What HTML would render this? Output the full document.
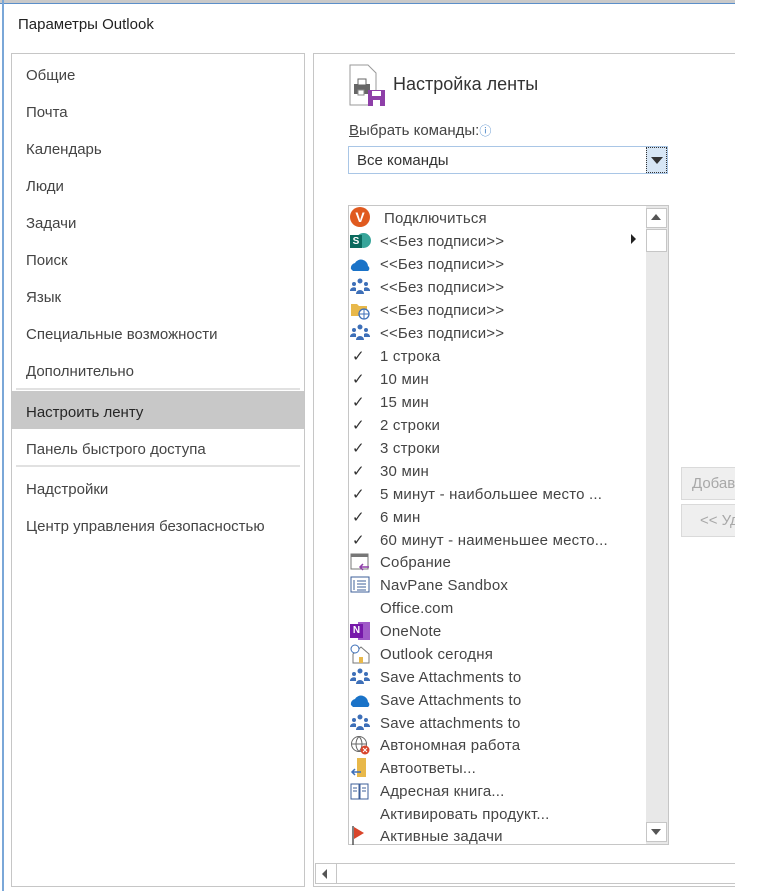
<!DOCTYPE html>
<html><head><meta charset="utf-8"><style>
*{margin:0;padding:0;box-sizing:border-box}
body{width:758px;height:891px;background:#fff;position:relative;overflow:hidden;font-family:"Liberation Sans","DejaVu Sans",sans-serif;color:#444}
.a{position:absolute}
.nav{font-size:15px;color:#444;left:26px;white-space:nowrap;margin-top:2px}
.it{position:absolute;left:380px;font-size:15px;white-space:nowrap;color:#444;line-height:20px;margin-top:1px;letter-spacing:0.2px}
.ck{position:absolute;left:352px;font-size:15px;color:#333;line-height:20px;margin-top:1px}
.ic{position:absolute;left:350px;width:20px;height:20px}
</style></head><body>
<div class="a" style="left:0;top:0;width:735px;height:3px;background:#c9c9c9"></div>
<div class="a" style="left:0;top:3px;width:735px;height:1px;background:#5b8fc9"></div>
<div class="a" style="left:2px;top:0;width:2px;height:891px;background:#7aa7d8"></div>
<div class="a" style="left:18px;top:16px;font-size:15px;color:#222">Параметры Outlook</div>

<div class="a" style="left:11px;top:53px;width:294px;height:834px;border:1px solid #c6c6c6"></div>
<div class="nav a" style="top:65px">Общие</div>
<div class="nav a" style="top:102px">Почта</div>
<div class="nav a" style="top:139px">Календарь</div>
<div class="nav a" style="top:176px">Люди</div>
<div class="nav a" style="top:213px">Задачи</div>
<div class="nav a" style="top:250px">Поиск</div>
<div class="nav a" style="top:287px">Язык</div>
<div class="nav a" style="top:324px">Специальные возможности</div>
<div class="nav a" style="top:361px">Дополнительно</div>
<div class="a" style="left:16px;top:388px;width:284px;height:2px;background:#e1e1e1"></div>
<div class="a" style="left:12px;top:391px;width:292px;height:38px;background:#c8c8c8"></div>
<div class="nav a" style="top:402px;color:#262626">Настроить ленту</div>
<div class="nav a" style="top:439px">Панель быстрого доступа</div>
<div class="a" style="left:16px;top:465px;width:284px;height:2px;background:#e1e1e1"></div>
<div class="nav a" style="top:479px">Надстройки</div>
<div class="nav a" style="top:516px">Центр управления безопасностью</div>

<div class="a" style="left:313px;top:53px;width:440px;height:834px;border:1px solid #c6c6c6;border-right:none"></div>
<svg class="a" style="left:348px;top:64px" width="40" height="44">
<path d="M2 1h18l8 8v32H2z" fill="#fff" stroke="#9a9a9a"/>
<rect x="6" y="20" width="16" height="10" fill="#666"/><rect x="10" y="15" width="8" height="6" fill="#fff" stroke="#666"/><rect x="10" y="26" width="6" height="5" fill="#fff" stroke="#888"/>
<rect x="20" y="26" width="17" height="16" fill="#8e3fa8"/><rect x="24" y="27" width="9" height="5" fill="#fff"/><rect x="25" y="36" width="7" height="6" fill="#fff"/>
</svg>
<div class="a" style="left:393px;top:74px;font-size:18px;color:#333">Настройка ленты</div>
<div class="a" style="left:349px;top:122px;font-size:15px;color:#444"><u>В</u>ыбрать команды:<span style="color:#4a86c8;font-size:12px;vertical-align:top">ⓘ</span></div>
<div class="a" style="left:348px;top:146px;width:320px;height:28px;border:1px solid #a9c6e6;background:#fff"></div>
<div class="a" style="left:357px;top:152px;font-size:15px;color:#333">Все команды</div>
<div class="a" style="left:646px;top:147px;width:21px;height:26px;border:1px dotted #333;background:#d7e6f5"></div>
<div class="a" style="left:651px;top:157px;width:0;height:0;border-left:6px solid transparent;border-right:6px solid transparent;border-top:7px solid #333"></div>

<div class="a" style="left:348px;top:205px;width:321px;height:640px;border:1px solid #c6c6c6;background:#fff"></div>
<div class="a" style="left:646px;top:206px;width:22px;height:638px;background:#e8e8e8"></div>
<div class="a" style="left:646px;top:208px;width:21px;height:20px;border:1px solid #c6c6c6;background:#fff"></div>
<div class="a" style="left:651px;top:214px;border-left:5px solid transparent;border-right:5px solid transparent;border-bottom:6px solid #555"></div>
<div class="a" style="left:646px;top:229px;width:21px;height:23px;border:1px solid #c6c6c6;background:#fff"></div>
<div class="a" style="left:646px;top:822px;width:21px;height:20px;border:1px solid #c6c6c6;background:#fff"></div>
<div class="a" style="left:651px;top:829px;border-left:5px solid transparent;border-right:5px solid transparent;border-top:6px solid #555"></div>
<div class="a" style="left:631px;top:234px;border-top:5px solid transparent;border-bottom:5px solid transparent;border-left:5px solid #222"></div>

<div class="ic" style="top:207px;border-radius:50%;background:#e05a1f;color:#fff;font-weight:bold;font-size:14px;text-align:center;line-height:20px">V</div>
<div class="it" style="top:208px;left:384px">Подключиться</div>
<div class="ic" style="top:231px"><div class="a" style="left:6px;top:2px;width:15px;height:15px;border-radius:50%;background:#37a59a"></div><div class="a" style="left:0;top:4px;width:12px;height:13px;background:#0b6a5e;color:#fff;font-size:10px;font-weight:bold;text-align:center;line-height:13px">S</div></div>
<div class="it" style="top:231px">&lt;&lt;Без подписи&gt;&gt;</div>
<svg class="ic" style="top:254px" width="20" height="20"><path d="M1 15a5 5 0 0 1 4-6a7 7 0 0 1 13 3a3 3 0 0 1 0 5H3z" fill="#1a73c8"/></svg>
<div class="it" style="top:254px">&lt;&lt;Без подписи&gt;&gt;</div>
<svg class="ic" style="top:277px" width="20" height="20"><g fill="#3d6fb8"><circle cx="10" cy="4" r="2.5"/><circle cx="4" cy="7" r="2"/><circle cx="16" cy="7" r="2"/><path d="M6 17a4 4 0 0 1 8 0z"/><path d="M0 13a4 4 0 0 1 6 -2v3H0z"/><path d="M14 11a4 4 0 0 1 6 2v1h-6z"/></g></svg>
<div class="it" style="top:277px">&lt;&lt;Без подписи&gt;&gt;</div>
<svg class="ic" style="top:300px" width="20" height="20"><path d="M1 4h6l2 2h8v10H1z" fill="#e8b84a"/><circle cx="14" cy="14" r="5" fill="#fff" stroke="#3d6fb8" stroke-width="1.3"/><path d="M9 14h10M14 9v10" stroke="#3d6fb8"/></svg>
<div class="it" style="top:300px">&lt;&lt;Без подписи&gt;&gt;</div>
<svg class="ic" style="top:323px" width="20" height="20"><g fill="#3d6fb8"><circle cx="10" cy="4" r="2.5"/><circle cx="4" cy="7" r="2"/><circle cx="16" cy="7" r="2"/><path d="M6 17a4 4 0 0 1 8 0z"/><path d="M0 13a4 4 0 0 1 6 -2v3H0z"/><path d="M14 11a4 4 0 0 1 6 2v1h-6z"/></g></svg>
<div class="it" style="top:323px">&lt;&lt;Без подписи&gt;&gt;</div>
<div class="ck" style="top:346px">✓</div><div class="it" style="top:346px">1 строка</div>
<div class="ck" style="top:369px">✓</div><div class="it" style="top:369px">10 мин</div>
<div class="ck" style="top:392px">✓</div><div class="it" style="top:392px">15 мин</div>
<div class="ck" style="top:415px">✓</div><div class="it" style="top:415px">2 строки</div>
<div class="ck" style="top:438px">✓</div><div class="it" style="top:438px">3 строки</div>
<div class="ck" style="top:461px">✓</div><div class="it" style="top:461px">30 мин</div>
<div class="ck" style="top:484px">✓</div><div class="it" style="top:484px">5 минут - наибольшее место ...</div>
<div class="ck" style="top:507px">✓</div><div class="it" style="top:507px">6 мин</div>
<div class="ck" style="top:530px">✓</div><div class="it" style="top:530px">60 минут - наименьшее место...</div>
<svg class="ic" style="top:552px" width="20" height="20"><rect x="1" y="2" width="17" height="15" fill="#fff" stroke="#777"/><rect x="1" y="2" width="17" height="3" fill="#777"/><path d="M19 15h-9m3-3l-3 3l3 3" stroke="#8e3fa8" stroke-width="1.5" fill="none"/></svg>
<div class="it" style="top:552px">Собрание</div>
<svg class="ic" style="top:575px" width="20" height="20"><rect x="1" y="2" width="18" height="15" fill="#fff" stroke="#3d5f9a"/><path d="M4 5v10M7 6h9M7 9h9M7 12h9M7 15h9" stroke="#3d5f9a"/></svg>
<div class="it" style="top:575px">NavPane Sandbox</div>
<div class="it" style="top:598px">Office.com</div>
<div class="ic" style="top:621px"><div class="a" style="left:8px;top:1px;width:12px;height:18px;background:#a05ac8"></div><div class="a" style="left:0;top:3px;width:13px;height:14px;background:#7719aa;color:#fff;font-size:10px;font-weight:bold;text-align:center;line-height:14px">N</div></div>
<div class="it" style="top:621px">OneNote</div>
<svg class="ic" style="top:644px" width="20" height="20"><path d="M3 19V10l8-7l8 7v9z" fill="#fff" stroke="#777"/><rect x="9" y="13" width="4" height="6" fill="#e8b84a"/><circle cx="5" cy="5" r="4" fill="#fff" stroke="#3d6fb8"/></svg>
<div class="it" style="top:644px">Outlook сегодня</div>
<svg class="ic" style="top:667px" width="20" height="20"><g fill="#3d6fb8"><circle cx="10" cy="4" r="2.5"/><circle cx="4" cy="7" r="2"/><circle cx="16" cy="7" r="2"/><path d="M6 17a4 4 0 0 1 8 0z"/><path d="M0 13a4 4 0 0 1 6 -2v3H0z"/><path d="M14 11a4 4 0 0 1 6 2v1h-6z"/></g></svg>
<div class="it" style="top:667px">Save Attachments to</div>
<svg class="ic" style="top:690px" width="20" height="20"><path d="M1 15a5 5 0 0 1 4-6a7 7 0 0 1 13 3a3 3 0 0 1 0 5H3z" fill="#1a73c8"/></svg>
<div class="it" style="top:690px">Save Attachments to</div>
<svg class="ic" style="top:713px" width="20" height="20"><g fill="#3d6fb8"><circle cx="10" cy="4" r="2.5"/><circle cx="4" cy="7" r="2"/><circle cx="16" cy="7" r="2"/><path d="M6 17a4 4 0 0 1 8 0z"/><path d="M0 13a4 4 0 0 1 6 -2v3H0z"/><path d="M14 11a4 4 0 0 1 6 2v1h-6z"/></g></svg>
<div class="it" style="top:713px">Save attachments to</div>
<svg class="ic" style="top:735px" width="20" height="20"><circle cx="9" cy="9" r="7.5" fill="none" stroke="#666"/><path d="M1.5 9h15M9 1.5c-4 4-4 11 0 15M9 1.5c4 4 4 11 0 15" stroke="#666" fill="none"/><circle cx="15" cy="15" r="4.5" fill="#d9452b"/><path d="M13 13l4 4M17 13l-4 4" stroke="#fff"/></svg>
<div class="it" style="top:735px">Автономная работа</div>
<svg class="ic" style="top:758px" width="20" height="20"><rect x="7" y="0" width="9" height="19" fill="#e8b84a"/><path d="M11 14H2m3-3l-3 3l3 3" stroke="#3d6fb8" stroke-width="1.5" fill="none"/></svg>
<div class="it" style="top:758px">Автоответы...</div>
<svg class="ic" style="top:781px" width="20" height="20"><path d="M1 3h8v15H1zM10 3h8v15h-8z" fill="#fff" stroke="#3d5f9a"/><path d="M3 7h4M3 10h4M12 7h4M12 10h4" stroke="#3d5f9a"/></svg>
<div class="it" style="top:781px">Адресная книга...</div>
<div class="it" style="top:804px">Активировать продукт...</div>
<svg class="ic" style="top:825px" width="20" height="20"><path d="M3 1v19" stroke="#555" stroke-width="1.5"/><path d="M4 2l10 6l-10 6z" fill="#d9452b"/></svg>
<div class="it" style="top:826px">Активные задачи</div>

<div class="a" style="left:681px;top:467px;width:60px;height:33px;border:1px solid #dadada;background:#efefef;color:#a8a8a8;font-size:15px;padding:7px 0 0 10px;white-space:nowrap;overflow:hidden">Добавить</div>
<div class="a" style="left:681px;top:504px;width:60px;height:33px;border:1px solid #dadada;background:#efefef;color:#a8a8a8;font-size:15px;padding:7px 0 0 18px;white-space:nowrap;overflow:hidden">&lt;&lt; Удалить</div>

<div class="a" style="left:315px;top:863px;width:440px;height:21px;border:1px solid #c6c6c6;background:#fff"></div>
<div class="a" style="left:336px;top:864px;width:1px;height:19px;background:#c6c6c6"></div>
<div class="a" style="left:322px;top:869px;border-top:5px solid transparent;border-bottom:5px solid transparent;border-right:5px solid #555"></div>
<div class="a" style="left:735px;top:0;width:23px;height:891px;background:#fff"></div>
</body></html>
